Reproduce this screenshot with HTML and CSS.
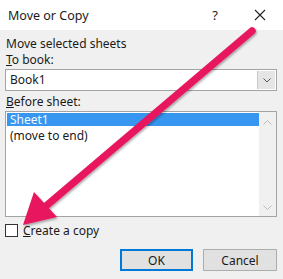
FILE: index.html
```html
<!DOCTYPE html>
<html lang="en">
<head>
    <meta charset="UTF-8">
    <title>Move or Copy</title>
    <link rel="stylesheet" href="styles.css">
</head>
<body>
    <div class="dialog">
        <div class="titlebar">
            <span class="titulo">Move or Copy</span>
            <span class="ajuda">?</span>
            <svg class="fechar" width="12" height="12" viewBox="0 0 12 12">
                <path d="M1 1 L11 11 M11 1 L1 11" stroke="#222" stroke-width="1.1" fill="none"/>
            </svg>
        </div>
        <div class="conteudo">
            <div class="rotulo">Move selected sheets</div>
            <div class="rotulo"><u>T</u>o book:</div>
            <div class="combo">
                <span class="combo-texto">Book1</span>
                <span class="combo-botao">
                    <svg width="8" height="5" viewBox="0 0 8 5"><path d="M0.5 0.5 L4 4 L7.5 0.5" stroke="#555" fill="none"/></svg>
                </span>
            </div>
            <div class="rotulo rotulo-lista"><u>B</u>efore sheet:</div>
            <div class="lista">
                <ul class="itens">
                    <li class="selecionado">Sheet1</li>
                    <li>(move to end)</li>
                </ul>
                <div class="rolagem">
                    <svg width="9" height="5" viewBox="0 0 9 5"><path d="M0.5 4.5 L4.5 0.5 L8.5 4.5" stroke="#bbb" fill="none"/></svg>
                    <svg width="9" height="5" viewBox="0 0 9 5"><path d="M0.5 0.5 L4.5 4.5 L8.5 0.5" stroke="#bbb" fill="none"/></svg>
                </div>
            </div>
            <label class="checar">
                <span class="caixa"></span>
                <span><u>C</u>reate a copy</span>
            </label>
            <div class="botoes">
                <button class="botao botao-ok">OK</button>
                <button class="botao">Cancel</button>
            </div>
        </div>
        <svg class="seta" width="283" height="279" viewBox="0 0 283 279">
            <defs>
                <filter id="sombra" x="-10%" y="-10%" width="120%" height="120%">
                    <feDropShadow dx="1" dy="1.5" stdDeviation="1.2" flood-color="#000" flood-opacity="0.35"/>
                </filter>
            </defs>
            <g filter="url(#sombra)" fill="#e8195f">
                <path d="M252 31 L46 206" stroke="#e8195f" stroke-width="7.5" stroke-linecap="round"/>
                <polygon points="23,225 34,192 57,217"/>
            </g>
        </svg>
    </div>
</body>
</html>
```

FILE: styles.css
```css
body {
    margin: 0;
    font: 12px "Noto Sans", "Open Sans", sans-serif;
    color: #1a1a1a;
}
div.dialog {
    position: relative;
    width: 283px;
    height: 279px;
    overflow: hidden;
}
div.titlebar {
    display: flex;
    align-items: center;
    height: 30px;
    background-color: white;
    padding-left: 8px;
    box-sizing: border-box;
}
span.titulo {
    flex: 1;
    font-size: 12.5px;
}
span.ajuda {
    font-size: 13px;
    margin-right: 36px;
}
svg.fechar {
    margin-right: 17px;
}
div.conteudo {
    background-color: #f0f0f0;
    height: 249px;
    padding: 6px 6px 0 6px;
    box-sizing: border-box;
}
div.rotulo {
    height: 16px;
    line-height: 16px;
}
div.rotulo-lista {
    margin-top: 3px;
}
div.combo {
    display: flex;
    height: 22px;
    margin: 1px 0 0 -1px;
    background-color: white;
    border: 1px solid #a4a4a4;
    box-sizing: border-box;
}
span.combo-texto {
    flex: 1;
    line-height: 20px;
    padding-left: 4px;
}
span.combo-botao {
    display: flex;
    align-items: center;
    justify-content: center;
    width: 17px;
    margin: 1px;
    background-color: #e5e5e5;
    border-left: 1px solid #c8c8c8;
}
div.lista {
    display: flex;
    height: 106px;
    margin: 1px 0 0 -1px;
    background-color: white;
    border: 1px solid #a4a4a4;
    box-sizing: border-box;
}
ul.itens {
    flex: 1;
    list-style: none;
    margin: 0;
    padding: 1px 0 0 1px;
}
ul.itens li {
    height: 16px;
    line-height: 16px;
    padding-left: 3px;
}
ul.itens li.selecionado {
    height: 13px;
    line-height: 13px;
    margin-bottom: 2px;
    background-color: #3797f0;
    color: #f2f8ff;
}
div.rolagem {
    display: flex;
    flex-direction: column;
    align-items: center;
    justify-content: space-between;
    width: 17px;
    padding: 8px 0 6px 0;
    background-color: #f0f0f0;
}
label.checar {
    display: flex;
    align-items: center;
    gap: 5px;
    margin: 7px 0 0 -1px;
    height: 13px;
}
span.caixa {
    width: 11px;
    height: 11px;
    border: 1px solid #333;
    background-color: white;
}
div.botoes {
    display: flex;
    justify-content: flex-end;
    gap: 10px;
    margin-top: 12px;
}
button.botao {
    width: 74px;
    height: 22px;
    font: 12px "Noto Sans", "Open Sans", sans-serif;
    color: #1a1a1a;
    background-color: #e1e1e1;
    border: 1px solid #adadad;
    padding: 0;
}
button.botao-ok {
    width: 73px;
    border: 2px solid #0078d7;
}
svg.seta {
    position: absolute;
    left: 0;
    top: 0;
}
```
